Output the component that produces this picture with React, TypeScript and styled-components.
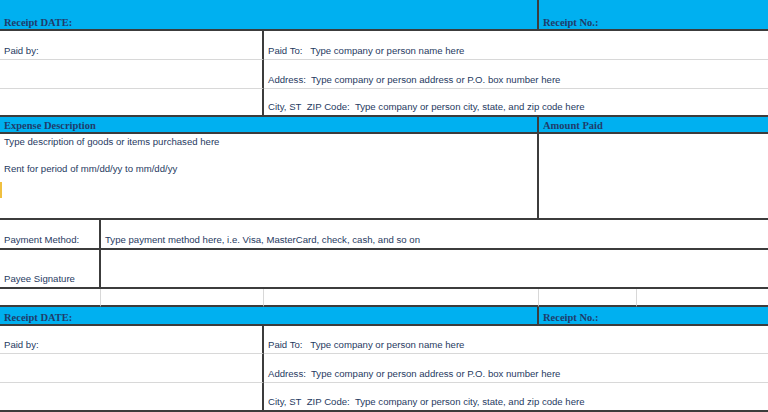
import React from "react";
import styled, { createGlobalStyle } from "styled-components";

const Global = createGlobalStyle`
  html, body { margin: 0; padding: 0; background: #fff; overflow: hidden; }
`;

const Sheet = styled.div`
  display: grid;
  grid-template-columns: 101px 163px 275px 98px 131px;
  grid-template-rows: 31px 29px 29px 28px 17px 86px 30px 39px 18px 19px 28px 29px 29px;
  width: 768px;
  height: 412px;
  overflow: hidden;
  font-family: "Liberation Sans", Arial, sans-serif;
  font-size: 9.6px;
  color: #1f3a5f;
`;

type Edge = "thick" | "light" | "none";
const edge = (e?: Edge) =>
  e === "thick" ? "2px solid #3c3c3c" : e === "light" ? "1px solid #d8d8d8" : "none";

const Cell = styled.div<{ $span?: number; $blue?: boolean; $r?: Edge; $b?: Edge; $top?: boolean }>`
  grid-column: span ${(p) => p.$span ?? 1};
  box-sizing: border-box;
  background: ${(p) => (p.$blue ? "#00b0f0" : "#fff")};
  border-right: ${(p) => edge(p.$r)};
  border-bottom: ${(p) => edge(p.$b)};
  display: flex;
  align-items: ${(p) => (p.$top ? "flex-start" : "flex-end")};
  padding: ${(p) => (p.$top ? "2px 4px 0" : "0 4px 3px")};
  white-space: nowrap;
  overflow: visible;
  position: relative;
`;

const Head = styled.span`
  font-family: "Liberation Serif", "Times New Roman", serif;
  font-weight: bold;
  font-size: 10.5px;
  color: #1f3d6b;
  margin-bottom: -2px;
`;

const Lines = styled.div`
  display: flex;
  flex-direction: column;
  gap: 16px;
`;

const Marker = styled.div`
  position: absolute;
  left: 0;
  top: 48px;
  width: 2px;
  height: 16px;
  background: #f0c040;
`;

const Header = () => (
  <>
    <Cell $span={3} $blue $r="thick" $b="thick"><Head>Receipt DATE:</Head></Cell>
    <Cell $span={2} $blue $b="thick"><Head>Receipt No.:</Head></Cell>
  </>
);

const Party = () => (
  <>
    <Cell $span={2} $r="thick" $b="light">Paid by:</Cell>
    <Cell $span={3} $b="light">Paid To:&nbsp;&nbsp; Type company or person name here</Cell>
    <Cell $span={2} $r="thick" $b="light" />
    <Cell $span={3} $b="light">Address:&nbsp; Type company or person address or P.O. box number here</Cell>
    <Cell $span={2} $r="thick" $b="thick" />
    <Cell $span={3} $b="thick">City, ST&nbsp; ZIP Code:&nbsp; Type company or person city, state, and zip code here</Cell>
  </>
);

export default function App() {
  return (
    <>
      <Global />
      <Sheet>
        <Header />
        <Party />
        <Cell $span={3} $blue $r="thick" $b="thick"><Head>Expense Description</Head></Cell>
        <Cell $span={2} $blue $b="thick"><Head>Amount Paid</Head></Cell>
        <Cell $span={3} $r="thick" $b="thick" $top>
          <Lines>
            <span>Type description of goods or items purchased here</span>
            <span>Rent for period of mm/dd/yy to mm/dd/yy</span>
          </Lines>
          <Marker />
        </Cell>
        <Cell $span={2} $b="thick" />
        <Cell $r="thick" $b="thick">Payment Method:</Cell>
        <Cell $span={4} $b="thick">Type payment method here, i.e. Visa, MasterCard, check, cash, and so on</Cell>
        <Cell $r="thick" $b="thick">Payee Signature</Cell>
        <Cell $span={4} $b="thick" />
        <Cell $r="light" $b="thick" />
        <Cell $r="light" $b="thick" />
        <Cell $r="light" $b="thick" />
        <Cell $r="light" $b="thick" />
        <Cell $b="thick" />
        <Header />
        <Party />
      </Sheet>
    </>
  );
}
